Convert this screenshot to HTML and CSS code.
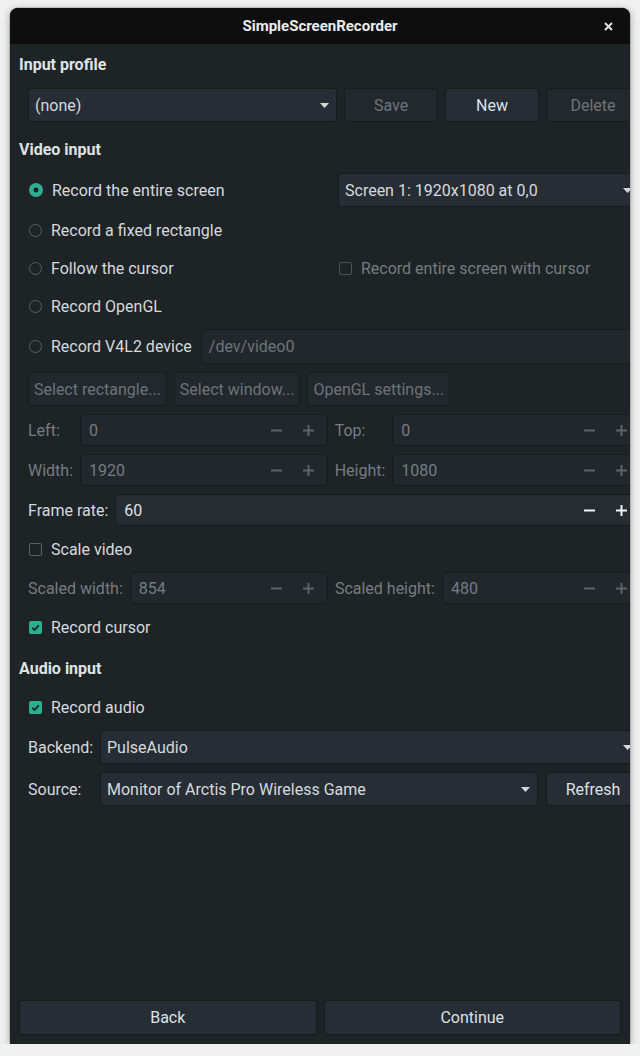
FILE: index.html
```html
<!DOCTYPE html>
<html lang="en">
<head>
  <meta charset="UTF-8" />
  <title>SimpleScreenRecorder</title>
  <link rel="stylesheet" href="styles.css">
</head>
<body>

<div class="window">
  <header class="titlebar">
    <span class="title">SimpleScreenRecorder</span>
    <svg class="close" width="9" height="9" viewBox="0 0 9 9"><path d="M1 1l7 7M8 1L1 8" /></svg>
  </header>

  <main class="content">
    <div class="sheet">

      <section class="group">
        <h2>Input profile</h2>
        <div class="group-body">
          <div class="profile-row">
            <div class="combo">
              <span class="combo-text">(none)</span>
              <svg class="arrow" width="9" height="5" viewBox="0 0 9 5"><path d="M0 0h9L4.5 5z"/></svg>
            </div>
            <button class="btn" disabled>Save</button>
            <button class="btn">New</button>
            <button class="btn" disabled>Delete</button>
          </div>
        </div>
      </section>

      <section class="group video">
        <h2>Video input</h2>
        <div class="group-body stack">
          <div class="radio-grid">
            <label class="opt"><span class="radio checked"></span>Record the entire screen</label>
            <div class="combo">
              <span class="combo-text">Screen 1: 1920x1080 at 0,0</span>
              <svg class="arrow" width="9" height="5" viewBox="0 0 9 5"><path d="M0 0h9L4.5 5z"/></svg>
            </div>
            <label class="opt"><span class="radio"></span>Record a fixed rectangle</label>
            <div></div>
            <label class="opt"><span class="radio"></span>Follow the cursor</label>
            <label class="opt disabled"><span class="check"></span>Record entire screen with cursor</label>
            <label class="opt"><span class="radio"></span>Record OpenGL</label>
            <div></div>
          </div>

          <div class="v4l2-row">
            <label class="opt"><span class="radio"></span>Record V4L2 device</label>
            <div class="field disabled">/dev/video0</div>
          </div>

          <div class="tool-row">
            <button class="btn small" disabled>Select rectangle...</button>
            <button class="btn small" disabled>Select window...</button>
            <button class="btn small" disabled>OpenGL settings...</button>
          </div>

          <div class="pair-grid disabled">
            <span class="lbl">Left:</span>
            <div class="spin"><span class="spin-val">0</span><span class="spin-btn"><svg width="11" height="11" viewBox="0 0 11 11"><path d="M0 4.5h11v2H0z"/></svg></span><span class="spin-btn"><svg width="11" height="11" viewBox="0 0 11 11"><path d="M0 4.5h11v2H0zM4.5 0h2v11h-2z"/></svg></span></div>
            <span class="lbl">Top:</span>
            <div class="spin"><span class="spin-val">0</span><span class="spin-btn"><svg width="11" height="11" viewBox="0 0 11 11"><path d="M0 4.5h11v2H0z"/></svg></span><span class="spin-btn"><svg width="11" height="11" viewBox="0 0 11 11"><path d="M0 4.5h11v2H0zM4.5 0h2v11h-2z"/></svg></span></div>

            <span class="lbl">Width:</span>
            <div class="spin"><span class="spin-val">1920</span><span class="spin-btn"><svg width="11" height="11" viewBox="0 0 11 11"><path d="M0 4.5h11v2H0z"/></svg></span><span class="spin-btn"><svg width="11" height="11" viewBox="0 0 11 11"><path d="M0 4.5h11v2H0zM4.5 0h2v11h-2z"/></svg></span></div>
            <span class="lbl">Height:</span>
            <div class="spin"><span class="spin-val">1080</span><span class="spin-btn"><svg width="11" height="11" viewBox="0 0 11 11"><path d="M0 4.5h11v2H0z"/></svg></span><span class="spin-btn"><svg width="11" height="11" viewBox="0 0 11 11"><path d="M0 4.5h11v2H0zM4.5 0h2v11h-2z"/></svg></span></div>
          </div>

          <div class="single-row">
            <span class="lbl">Frame rate:</span>
            <div class="spin active"><span class="spin-val">60</span><span class="spin-btn"><svg width="11" height="11" viewBox="0 0 11 11"><path d="M0 4.5h11v2H0z"/></svg></span><span class="spin-btn"><svg width="11" height="11" viewBox="0 0 11 11"><path d="M0 4.5h11v2H0zM4.5 0h2v11h-2z"/></svg></span></div>
          </div>

          <label class="opt check-row"><span class="check"></span>Scale video</label>

          <div class="pair-grid disabled">
            <span class="lbl">Scaled width:</span>
            <div class="spin"><span class="spin-val">854</span><span class="spin-btn"><svg width="11" height="11" viewBox="0 0 11 11"><path d="M0 4.5h11v2H0z"/></svg></span><span class="spin-btn"><svg width="11" height="11" viewBox="0 0 11 11"><path d="M0 4.5h11v2H0zM4.5 0h2v11h-2z"/></svg></span></div>
            <span class="lbl">Scaled height:</span>
            <div class="spin"><span class="spin-val">480</span><span class="spin-btn"><svg width="11" height="11" viewBox="0 0 11 11"><path d="M0 4.5h11v2H0z"/></svg></span><span class="spin-btn"><svg width="11" height="11" viewBox="0 0 11 11"><path d="M0 4.5h11v2H0zM4.5 0h2v11h-2z"/></svg></span></div>
          </div>

          <label class="opt check-row"><span class="check checked"><svg width="13" height="13" viewBox="0 0 13 13"><path d="M3.3 6.8l2.2 2.2 4.3-4.6"/></svg></span>Record cursor</label>
        </div>
      </section>

      <section class="group audio">
        <h2>Audio input</h2>
        <div class="group-body stack">
          <label class="opt check-row"><span class="check checked"><svg width="13" height="13" viewBox="0 0 13 13"><path d="M3.3 6.8l2.2 2.2 4.3-4.6"/></svg></span>Record audio</label>

          <div class="audio-row">
            <span class="lbl">Backend:</span>
            <div class="combo">
              <span class="combo-text">PulseAudio</span>
              <svg class="arrow" width="9" height="5" viewBox="0 0 9 5"><path d="M0 0h9L4.5 5z"/></svg>
            </div>
          </div>

          <div class="audio-row">
            <span class="lbl">Source:</span>
            <div class="source">
              <div class="combo">
                <span class="combo-text">Monitor of Arctis Pro Wireless Game</span>
                <svg class="arrow" width="9" height="5" viewBox="0 0 9 5"><path d="M0 0h9L4.5 5z"/></svg>
              </div>
              <button class="btn">Refresh</button>
            </div>
          </div>
        </div>
      </section>

    </div>
  </main>

  <footer class="nav">
    <button class="btn wide">Back</button>
    <button class="btn wide">Continue</button>
  </footer>
</div>

</body>
</html>
```

FILE: styles.css
```css
body {
  margin: 0;
  background: #f1f1f1;
  font-family: Roboto, 'Liberation Sans', sans-serif;
  font-size: 16px;
  color: #d5dade;
}

.window {
  margin: 8px 10px 0;
  width: 620px;
  height: 1036px;
  background: #1e2326;
  border-radius: 8px 8px 0 0;
  box-shadow: 0 2px 9px rgba(0, 0, 0, 0.35), 0 0 0 1px rgba(0, 0, 0, 0.12);
  overflow: hidden;
  display: flex;
  flex-direction: column;
}

.titlebar {
  height: 36px;
  flex: none;
  background: #0e0e0e;
  display: grid;
  grid-template-columns: 1fr auto 1fr;
  align-items: center;
}

.title {
  grid-column: 2;
  font-weight: bold;
  font-size: 15px;
  color: #ececec;
}

.close {
  grid-column: 3;
  justify-self: end;
  margin-right: 17px;
}

.close path {
  stroke: #e0e0e0;
  stroke-width: 2;
}

.content {
  flex: 1;
  overflow: hidden;
}

.sheet {
  width: 621px;
  padding: 11px 0 0 9px;
}

h2 {
  margin: 0;
  height: 20px;
  line-height: 20px;
  font-size: 16px;
  font-weight: bold;
  color: #dfe3e6;
}

.group-body {
  margin: 13px 0 0 9px;
}

.video {
  margin-top: 18px;
}

.video .group-body {
  margin-top: 13px;
}

.audio {
  margin-top: 17px;
}

.stack {
  display: flex;
  flex-direction: column;
  gap: 8px;
}

/* buttons, combos, fields */

.btn {
  font: inherit;
  color: #dde1e4;
  background: #272d34;
  border: 1px solid #171b1e;
  border-radius: 3px;
  height: 34px;
  min-width: 94px;
  padding: 0 6px;
  cursor: pointer;
}

.btn:disabled {
  background: #22282c;
  color: #6e7479;
}

.btn.small {
  min-width: 0;
  padding: 0 5px;
}

.combo {
  flex: 1;
  min-width: 0;
  height: 34px;
  box-sizing: border-box;
  display: flex;
  align-items: center;
  padding: 0 7px 0 6px;
  background: #272d34;
  border: 1px solid #171b1e;
  border-radius: 3px;
}

.combo-text {
  flex: 1;
  white-space: nowrap;
}

.arrow {
  fill: #d5d9dc;
}

.field {
  flex: 1;
  height: 35px;
  box-sizing: border-box;
  display: flex;
  align-items: center;
  padding: 0 7px;
  background: #22272b;
  border: 1px solid #171b1e;
  border-radius: 3px;
}

.field.disabled {
  color: #6e7479;
}

/* radios and checks */

.opt {
  display: flex;
  align-items: center;
  height: 30px;
  gap: 9px;
  white-space: nowrap;
}

.opt.disabled {
  color: #767c81;
}

.radio {
  width: 13px;
  height: 13px;
  margin-left: 1px;
  border: 1px solid #5a6065;
  border-radius: 50%;
  box-sizing: border-box;
}

.radio.checked {
  border: none;
  width: 14px;
  height: 14px;
  background: radial-gradient(circle, #1e2326 2.2px, #2eae91 2.8px);
}

.check {
  width: 13px;
  height: 13px;
  margin-left: 1px;
  border: 1px solid #5a6065;
  border-radius: 2px;
  box-sizing: border-box;
  display: flex;
}

.check.checked {
  border: none;
  background: #2eae91;
}

.check.checked path {
  fill: none;
  stroke: #1e2326;
  stroke-width: 1.8;
}

.opt.disabled .check {
  border-color: #4d5357;
}

/* rows */

.profile-row {
  display: flex;
  gap: 7px;
}

.radio-grid {
  display: grid;
  grid-template-columns: 1fr 1fr;
  grid-template-rows: 34px 30px 30px 30px;
  align-items: center;
  gap: 8px;
}

.radio-grid .combo {
  align-self: stretch;
}

.v4l2-row {
  display: flex;
  align-items: center;
  gap: 9px;
}

.tool-row {
  display: flex;
  gap: 7px;
}

.pair-grid {
  display: grid;
  grid-template-columns: auto 1fr auto 1fr;
  grid-auto-rows: 32px;
  align-items: center;
  gap: 8px 7px;
}

.single-row {
  display: flex;
  align-items: center;
  gap: 7px;
  height: 32px;
}

.single-row .spin {
  flex: 1;
}

.disabled .lbl {
  color: #767c81;
}

.spin {
  height: 32px;
  box-sizing: border-box;
  display: flex;
  align-items: center;
  padding: 0 2px 0 8px;
  background: #22272b;
  border: 1px solid #171b1e;
  border-radius: 3px;
  color: #767c81;
}

.spin.active {
  background: #262c31;
  color: #dde1e4;
}

.spin-val {
  flex: 1;
}

.spin-btn {
  width: 32px;
  display: flex;
  justify-content: center;
}

.spin-btn svg {
  fill: #5d6368;
}

.spin.active .spin-btn svg {
  fill: #f2f2f2;
}

.audio-row {
  display: grid;
  grid-template-columns: 65px 1fr;
  align-items: center;
  gap: 7px;
}

.source {
  display: flex;
  gap: 8px;
}

/* bottom navigation */

.nav {
  flex: none;
  display: flex;
  gap: 7px;
  padding: 0 9px 9px;
}

.btn.wide {
  flex: 1;
  height: 35px;
}
```
